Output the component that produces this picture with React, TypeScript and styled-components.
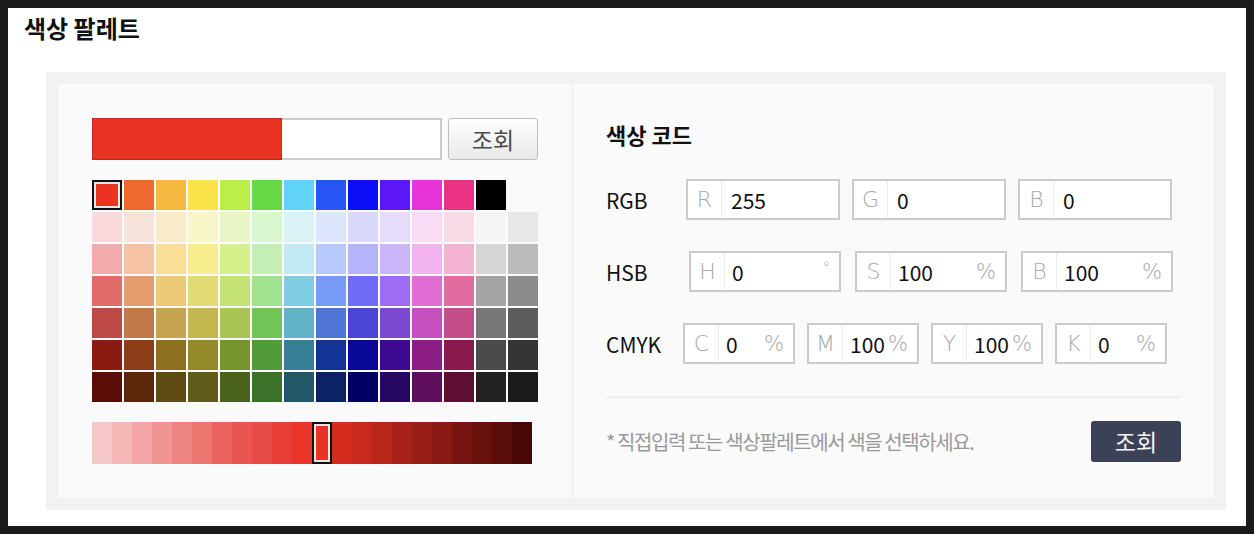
import React from "react";
import styled, { createGlobalStyle } from "styled-components";

const Global = createGlobalStyle`
  html, body { margin: 0; padding: 0; background: #1a1a1a; }
  body { padding: 8px; font-family: "Noto Sans CJK KR", "Noto Sans", sans-serif; }
  * { box-sizing: border-box; }
`;

const Frame = styled.div`
  width: 1238px;
  height: 518px;
  background: #ffffff;
  display: flex;
  flex-direction: column;
`;

const Title = styled.h1`
  margin: 0;
  height: 64px;
  padding: 4px 0 0 16px;
  font-size: 24px;
  line-height: 32px;
  font-weight: 700;
  color: #111;
`;

const Outer = styled.div`
  margin: 0 20px 0 38px;
  padding: 12px;
  background: #f2f2f2;
  height: 438px;
`;

const Inner = styled.div`
  background: #fafafa;
  height: 100%;
  display: grid;
  grid-template-columns: 515px 1fr;
`;

const LeftCol = styled.div`
  padding: 34px;
  border-right: 1px solid #ebebeb;
  display: flex;
  flex-direction: column;
`;

const PreviewRow = styled.div`
  display: flex;
  gap: 6px;
  height: 42px;
`;

const Preview = styled.div`
  width: 350px;
  display: flex;
`;

const Fill = styled.div<{ $c: string }>`
  width: 190px;
  background: ${(p) => p.$c};
  border: 1px solid #c4281c;
`;

const Rest = styled.div`
  flex: 1;
  background: #fff;
  border: 2px solid #cccccc;
  border-left: none;
`;

const LightButton = styled.button`
  width: 90px;
  height: 42px;
  border: 1px solid #bdbdbd;
  border-radius: 3px;
  background: linear-gradient(#ffffff, #e9e9e9);
  color: #4a4a4a;
  font-family: inherit;
  font-size: 23px;
  line-height: 1;
  padding: 0;
`;

const Grid = styled.div`
  margin-top: 20px;
  display: grid;
  grid-template-columns: repeat(14, 30px);
  grid-auto-rows: 30px;
  gap: 2px;
`;

const Swatch = styled.div<{ $c: string; $sel?: boolean }>`
  background: ${(p) => p.$c};
  box-shadow: ${(p) => (p.$sel ? "inset 0 0 0 2px #111, inset 0 0 0 4px #e6e6e6" : "none")};
`;

const Ramp = styled.div`
  margin-top: 20px;
  display: flex;
  height: 42px;
`;

const Step = styled.div<{ $c: string; $sel?: boolean }>`
  width: 20px;
  background: ${(p) => p.$c};
  box-shadow: ${(p) => (p.$sel ? "inset 0 0 0 2px #111, inset 0 0 0 4px #e6e6e6" : "none")};
`;

const RightCol = styled.div`
  padding: 35px 33px 0 33px;
  display: flex;
  flex-direction: column;
`;

const Heading = styled.h2`
  margin: 0 0 30px 0;
  font-size: 22px;
  line-height: 30px;
  font-weight: 700;
  color: #111;
`;

const Row = styled.div`
  display: flex;
  align-items: center;
  height: 41px;
  margin-bottom: 31px;
`;

const RowLabel = styled.div<{ $w: number }>`
  width: ${(p) => p.$w}px;
  font-size: 21px;
  color: #111;
  flex-shrink: 0;
`;

const Boxes = styled.div<{ $gap: number }>`
  display: flex;
  gap: ${(p) => p.$gap}px;
`;

const Box = styled.div<{ $w: number }>`
  width: ${(p) => p.$w}px;
  height: 41px;
  border: 2px solid #cbcbcb;
  background: #fff;
  display: flex;
  align-items: center;
`;

const BoxKey = styled.span`
  width: 34px;
  height: 100%;
  border-right: 1px solid #ececec;
  display: flex;
  align-items: center;
  justify-content: center;
  font-family: "DejaVu Sans", sans-serif;
  font-weight: 200;
  font-size: 22px;
  color: #a8a8a8;
`;

const BoxValue = styled.span<{ $pad: number }>`
  flex: 1;
  padding-left: ${(p) => p.$pad}px;
  font-size: 21px;
  color: #111;
`;

const BoxUnit = styled.span<{ $deg?: boolean }>`
  margin-right: 9px;
  font-family: "DejaVu Sans", sans-serif;
  font-weight: 200;
  font-size: ${(p) => (p.$deg ? "15px" : "21px")};
  align-self: ${(p) => (p.$deg ? "flex-start" : "center")};
  margin-top: ${(p) => (p.$deg ? "6px" : "0")};
  color: #a8a8a8;
`;

const Divider = styled.div`
  height: 2px;
  background: #efefef;
  margin-top: 1px;
`;

const Footer = styled.div`
  margin-top: 23px;
  display: flex;
  align-items: center;
  justify-content: space-between;
`;

const Hint = styled.p`
  margin: 0;
  font-size: 20px;
  letter-spacing: -1.4px;
  color: #999999;
`;

const DarkButton = styled.button`
  width: 90px;
  height: 41px;
  border: none;
  border-radius: 3px;
  background: #3b4257;
  color: #f2f2f2;
  font-family: inherit;
  font-size: 23px;
  line-height: 1;
  padding: 0;
`;

const palette: string[][] = [
  ["#e93323", "#ee6a2f", "#f5b942", "#f9e24a", "#bcee4a", "#67d946", "#62d3f8", "#2856f5", "#0d0ff6", "#5c17f5", "#e833d6", "#eb3282", "#000000", "transparent"],
  ["#f9d9dc", "#f6e3da", "#f8ecca", "#f8f5c9", "#eaf5c5", "#d9f7cf", "#d9f3f7", "#dce5fc", "#dad8fa", "#e5dbfb", "#f9dbf6", "#f9dbe7", "#f5f5f5", "#e8e8e8"],
  ["#f2aaaa", "#f5c3a4", "#f9df95", "#f7ec8e", "#d6f18a", "#c4efb7", "#c0eaf3", "#b8c9fb", "#b5b3fa", "#ccb6fa", "#f2b3ef", "#f4b3d3", "#d5d5d5", "#bbbbbb"],
  ["#e06b68", "#e79c6d", "#ecc976", "#e2da72", "#c5e374", "#a0e28d", "#7ecde2", "#7799f7", "#6e6cf6", "#9e6cf5", "#e16dd5", "#e16da0", "#a5a5a5", "#8b8b8b"],
  ["#bd4a46", "#c3784a", "#c6a34e", "#c4b74f", "#a8c554", "#6fc556", "#63b3c8", "#4f76d6", "#4a45d4", "#7c4ad2", "#c64fc0", "#c54e88", "#777777", "#5c5c5c"],
  ["#8b1a13", "#8c3e18", "#8f6f20", "#958a2a", "#76962c", "#519b3a", "#377f96", "#133494", "#0a0898", "#3f0a92", "#8b1d85", "#8a1a4e", "#4b4b4b", "#343434"],
  ["#5c0c07", "#5a270b", "#5e4a12", "#605d1b", "#4b621c", "#3a7229", "#235867", "#0b2264", "#020065", "#250763", "#5e0e5a", "#5e0d33", "#222222", "#1a1a1a"],
];

const ramp = [
  "#f7c8c8", "#f5b6b6", "#f2a5a4", "#f09593", "#ee8580", "#ec7570", "#ea6560", "#e95550", "#e84a45", "#e73f38", "#e9352a",
  "#e93323", "#d62c1f", "#c8281d", "#b9241b", "#a82119", "#971d15", "#891913", "#781510", "#68110c", "#5a0d09", "#480606",
];

type Field = { k: string; v: string; u?: string; deg?: boolean };

const rows: { label: string; lw: number; bw: number; gap: number; pad: number; fields: Field[] }[] = [
  { label: "RGB", lw: 80, bw: 154, gap: 12, pad: 9, fields: [{ k: "R", v: "255" }, { k: "G", v: "0" }, { k: "B", v: "0" }] },
  { label: "HSB", lw: 83, bw: 152, gap: 14, pad: 7, fields: [{ k: "H", v: "0", u: "°", deg: true }, { k: "S", v: "100", u: "%" }, { k: "B", v: "100", u: "%" }] },
  { label: "CMYK", lw: 77, bw: 112, gap: 12, pad: 7, fields: [{ k: "C", v: "0", u: "%" }, { k: "M", v: "100", u: "%" }, { k: "Y", v: "100", u: "%" }, { k: "K", v: "0", u: "%" }] },
];

export default function App() {
  return (
    <>
      <Global />
      <Frame>
        <Title>색상 팔레트</Title>
        <Outer>
          <Inner>
            <LeftCol>
              <PreviewRow>
                <Preview>
                  <Fill $c="#e93323" />
                  <Rest />
                </Preview>
                <LightButton>조회</LightButton>
              </PreviewRow>
              <Grid>
                {palette.flatMap((row, r) =>
                  row.map((c, i) => <Swatch key={`${r}-${i}`} $c={c} $sel={r === 0 && i === 0} />)
                )}
              </Grid>
              <Ramp>
                {ramp.map((c, i) => (
                  <Step key={i} $c={c} $sel={i === 11} />
                ))}
              </Ramp>
            </LeftCol>
            <RightCol>
              <Heading>색상 코드</Heading>
              {rows.map((row) => (
                <Row key={row.label}>
                  <RowLabel $w={row.lw}>{row.label}</RowLabel>
                  <Boxes $gap={row.gap}>
                    {row.fields.map((f) => (
                      <Box key={f.k} $w={row.bw}>
                        <BoxKey>{f.k}</BoxKey>
                        <BoxValue $pad={row.pad}>{f.v}</BoxValue>
                        {f.u && <BoxUnit $deg={f.deg}>{f.u}</BoxUnit>}
                      </Box>
                    ))}
                  </Boxes>
                </Row>
              ))}
              <Divider />
              <Footer>
                <Hint>* 직접입력 또는 색상팔레트에서 색을 선택하세요.</Hint>
                <DarkButton>조회</DarkButton>
              </Footer>
            </RightCol>
          </Inner>
        </Outer>
      </Frame>
    </>
  );
}
